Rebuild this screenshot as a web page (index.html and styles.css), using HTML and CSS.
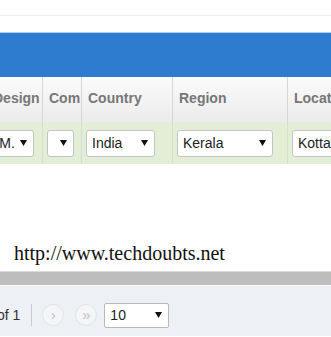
FILE: index.html
```html
<!DOCTYPE html>
<html>
<head>
<meta charset="utf-8">
<link rel="stylesheet" href="styles.css">
</head>
<body>
<div class="page">
  <div class="topbar"></div>
  <div class="gap"></div>
  <div class="grid">
    <div class="caption"></div>
    <div class="row head">
      <div class="cell c1">Design</div>
      <div class="cell c2">Com</div>
      <div class="cell c3">Country</div>
      <div class="cell c4">Region</div>
      <div class="cell c5">Location</div>
    </div>
    <div class="row data">
      <div class="cell c1"><div class="sel s1"><span class="val">A.M.</span><svg class="arr" width="7" height="6" viewBox="0 0 7 6"><polygon points="0,0 7,0 3.5,6" fill="#111"/></svg></div></div>
      <div class="cell c2"><div class="sel s2"><span class="val"></span><svg class="arr" width="7" height="6" viewBox="0 0 7 6"><polygon points="0,0 7,0 3.5,6" fill="#111"/></svg></div></div>
      <div class="cell c3"><div class="sel s3"><span class="val">India</span><svg class="arr" width="7" height="6" viewBox="0 0 7 6"><polygon points="0,0 7,0 3.5,6" fill="#111"/></svg></div></div>
      <div class="cell c4"><div class="sel s4"><span class="val">Kerala</span><svg class="arr" width="7" height="6" viewBox="0 0 7 6"><polygon points="0,0 7,0 3.5,6" fill="#111"/></svg></div></div>
      <div class="cell c5"><div class="sel s5"><span class="val">Kottayam</span><svg class="arr" width="7" height="6" viewBox="0 0 7 6"><polygon points="0,0 7,0 3.5,6" fill="#111"/></svg></div></div>
    </div>
  </div>
  <div class="blank">
    <div class="url">http://www.techdoubts.net</div>
  </div>
  <div class="scrollbar"></div>
  <div class="pager">
    <span class="pageof">of 1</span>
    <span class="sep"></span>
    <span class="pbtn">&#8250;</span>
    <span class="pbtn">&#187;</span>
    <div class="sel psel"><span class="val">10</span><svg class="arr" width="7" height="6" viewBox="0 0 7 6"><polygon points="0,0 7,0 3.5,6" fill="#111"/></svg></div>
  </div>
</div>
</body>
</html>
```

FILE: styles.css
```css
html, body {
  margin: 0;
  padding: 0;
  background: #ffffff;
}
.page {
  width: 331px;
  height: 337px;
  overflow: hidden;
  font-family: "Liberation Sans", Arial, sans-serif;
}
.topbar {
  height: 15px;
  border-bottom: 1px solid #ececec;
}
.gap {
  height: 16px;
}
.grid {
  border-top: 1px solid #a8d2f4;
}
.caption {
  height: 44px;
  background: #2e7ccf;
}
.row {
  display: flex;
  margin-left: -11px;
  width: 420px;
}
.cell {
  flex: none;
  box-sizing: border-box;
  border-right: 1px solid #d6d6d6;
  display: flex;
  align-items: center;
  overflow: hidden;
  white-space: nowrap;
}
.c1 { width: 54px; }
.c2 { width: 39px; }
.c3 { width: 91px; }
.c4 { width: 115px; }
.c5 { width: 120px; }
.head {
  height: 45px;
  background: linear-gradient(#fbfbfb, #ebebeb);
}
.head .cell {
  padding-left: 6px;
  padding-bottom: 4px;
  font-weight: bold;
  font-size: 14px;
  color: #777777;
}
.head .c1 { padding-left: 4px; }
.data {
  height: 42px;
  background: #e3eed6;
}
.data .cell {
  padding-left: 4px;
  border-right-color: #d7dfcc;
}
.sel {
  flex: none;
  box-sizing: border-box;
  height: 27px;
  border: 1px solid #c4c4c4;
  border-radius: 3px;
  background: #ffffff;
  display: flex;
  align-items: center;
  justify-content: space-between;
  padding: 0 6px 0 5px;
  font-size: 14px;
  color: #222;
  overflow: hidden;
}
.s1 { width: 41px; }
.s2 { width: 27px; }
.s3 { width: 69px; }
.s4 { width: 96px; }
.s5 { width: 80px; }
.s1 .val { margin-left: -13px; }
.s5 .val { overflow: hidden; }
.arr { flex: none; }
.blank {
  height: 107px;
  box-sizing: border-box;
  padding-top: 78px;
}
.url {
  margin-left: 14px;
  font-family: "Liberation Serif", "Times New Roman", serif;
  font-size: 20px;
  color: #111;
  line-height: 22px;
}
.scrollbar {
  height: 13px;
  border-top: 1px solid #dcdcdc;
  background: #bdbdbd;
}
.pager {
  border-top: 1px solid #f6f7f9;
  background: #edf0f5;
  display: flex;
  align-items: center;
  box-sizing: border-box;
  padding-top: 8px;
  height: 51px;
}
.pageof {
  margin-left: -3px;
  font-size: 14px;
  color: #333;
}
.sep {
  width: 1px;
  height: 22px;
  background: #c9ccd2;
  margin-left: 11px;
}
.pbtn {
  width: 22px;
  height: 22px;
  box-sizing: border-box;
  border-radius: 50%;
  border: 1px solid #e0e3e8;
  background: #f4f5f7;
  color: #c2c2c2;
  font-size: 15px;
  line-height: 1;
  padding-bottom: 2px;
  display: flex;
  align-items: center;
  justify-content: center;
  margin-left: 10px;
}
.pbtn + .pbtn { margin-left: 11px; }
.psel {
  width: 65px;
  height: 25px;
  margin-left: 7px;
  border-color: #b9b9b9;
  border-radius: 2px;
}
```
